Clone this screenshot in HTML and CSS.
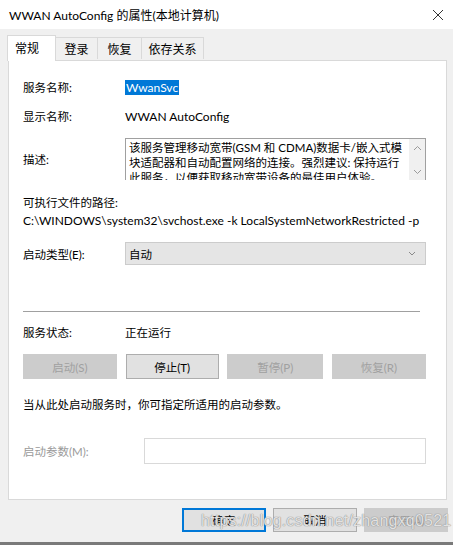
FILE: index.html
```html
<!DOCTYPE html>
<html>

<head>
	<meta charset="utf-8">
	<title>WWAN AutoConfig 的属性(本地计算机)</title>
	<link rel="stylesheet" href="styles.css">
</head>

<body>
	<div class="dialog">

		<div class="titlebar">
			<span class="title_text">WWAN AutoConfig 的属性(本地计算机)</span>
			<svg class="close_icon" width="12" height="12" viewBox="0 0 12 12">
				<path d="M1 1 L11 11 M11 1 L1 11" stroke="#333" stroke-width="1" fill="none" />
			</svg>
		</div>

		<div class="tabs">
			<div class="tab tab_active">常规</div>
			<div class="tab tab_login">登录</div>
			<div class="tab tab_recover">恢复</div>
			<div class="tab tab_deps">依存关系</div>
		</div>

		<div class="panel">

			<div class="row row_name">
				<div class="leftcolumn">服务名称:</div>
				<span class="selected_text">WwanSvc</span>
			</div>

			<div class="row row_display">
				<div class="leftcolumn">显示名称:</div>
				<span class="latin_text">WWAN AutoConfig</span>
			</div>

			<div class="row row_desc">
				<div class="leftcolumn">描述:</div>
				<div class="text_box">
					<div class="text_box_inner">
						该服务管理移动宽带(GSM 和 CDMA)数据卡/嵌入式模<br>
						块适配器和自动配置网络的连接。强烈建议: 保持运行<br>
						此服务，以便获取移动宽带设备的最佳用户体验。
					</div>
					<div class="scrollbar">
						<svg width="9" height="6" viewBox="0 0 9 6">
							<path d="M1 5 L4.5 1.5 L8 5" stroke="#9a9a9a" stroke-width="1" fill="none" />
						</svg>
						<svg width="9" height="6" viewBox="0 0 9 6">
							<path d="M1 1 L4.5 4.5 L8 1" stroke="#9a9a9a" stroke-width="1" fill="none" />
						</svg>
					</div>
				</div>
			</div>

			<div class="row row_path_label">可执行文件的路径:</div>
			<div class="row row_path">C:\WINDOWS\system32\svchost.exe -k LocalSystemNetworkRestricted -p</div>

			<div class="row row_start">
				<div class="leftcolumn">启动类型(E):</div>
				<div class="combo_box">
					<span>自动</span>
					<svg width="8" height="5" viewBox="0 0 8 5">
						<path d="M1 1 L4 4 L7 1" stroke="#8a8a8a" stroke-width="1" fill="none" />
					</svg>
				</div>
			</div>

			<div class="separator"></div>

			<div class="row row_status">
				<div class="leftcolumn">服务状态:</div>
				<span>正在运行</span>
			</div>

			<div class="button_row">
				<div class="button_menu button_disabled">启动(S)</div>
				<div class="button_menu">停止(T)</div>
				<div class="button_menu button_disabled">暂停(P)</div>
				<div class="button_menu button_disabled">恢复(R)</div>
			</div>

			<div class="row row_note">当从此处启动服务时，你可指定所适用的启动参数。</div>

			<div class="row row_params">
				<div class="leftcolumn leftcolumn_wide text_disabled">启动参数(M):</div>
				<div class="input_box"></div>
			</div>

		</div>

		<div class="footer">
			<div class="button_menu button_footer button_default">确定</div>
			<div class="button_menu button_footer">取消</div>
			<div class="button_menu button_footer button_disabled">应用(A)</div>
			<span class="watermark">https://blog.csdn.net/zhangxq0521</span>
		</div>

		<div class="bottom_edge"></div>

	</div>
</body>

</html>
```

FILE: styles.css
```css
html,
body {
	margin: 0;
	padding: 0;
}

body {
	width: 453px;
	height: 545px;
	overflow: hidden;
	background-color: #f0f0f0;
	font-family: Lato, "Noto Sans CJK SC", sans-serif;
	font-size: 11.5px;
	color: #000;
}

.dialog {
	display: flex;
	flex-direction: column;
	height: 545px;
}

.titlebar {
	height: 29px;
	background-color: #fff;
	display: flex;
	align-items: center;
	justify-content: space-between;
	padding: 0 9px 0 9px;
}

.title_text {
	font-size: 12px;
}

.tabs {
	display: flex;
	align-items: flex-end;
	height: 31px;
	padding-left: 7px;
	position: relative;
	z-index: 1;
	font-size: 12px;
}

.tab {
	height: 21px;
	border: 1px solid #d9d9d9;
	border-bottom: none;
	border-left: none;
	background-color: #f0f0f0;
	display: flex;
	align-items: center;
	justify-content: center;
	margin-bottom: 1px;
}

.tab_active {
	width: 49px;
	justify-content: flex-start;
	padding: 0 0 2px 7px;
	box-sizing: border-box;
	height: 26px;
	background-color: #fff;
	border-left: 1px solid #d9d9d9;
	margin-bottom: -1px;
}

.tab_login {
	width: 41px;
}

.tab_recover {
	width: 43px;
}

.tab_deps {
	width: 61px;
}

.panel {
	margin: 0 6px 0 8px;
	height: 438px;
	background-color: #fff;
	border: 1px solid #d9d9d9;
	padding: 0 20px 0 14px;
}

.row {
	display: flex;
	align-items: center;
	white-space: nowrap;
}

.leftcolumn {
	width: 102px;
	flex: none;
}

.leftcolumn_wide {
	width: 121px;
}

.latin_text {
	font-size: 12px;
}

.row_name {
	margin-top: 15px;
	height: 22px;
}

.selected_text {
	background-color: #0078d7;
	color: #fff;
	padding: 0 1px;
	line-height: 15px;
	font-size: 12px;
}

.row_display {
	margin-top: 7px;
	height: 22px;
}

.row_desc {
	margin-top: 11px;
	height: 42px;
}

.text_box {
	flex: 1;
	height: 41px;
	border: 1px solid #a0a0a0;
	border-bottom: none;
	display: flex;
	overflow: hidden;
}

.text_box_inner {
	flex: 1;
	padding: 1px 0 0 3px;
	line-height: 15px;
	overflow: hidden;
	white-space: nowrap;
}

.scrollbar {
	width: 16px;
	flex: none;
	background-color: #f0f0f0;
	display: flex;
	flex-direction: column;
	align-items: center;
	justify-content: space-between;
	padding: 6px 0 5px 0;
}

.row_path_label {
	margin-top: 12px;
	height: 19px;
}

.row_path {
	height: 19px;
	font-size: 12px;
}

.row_start {
	margin-top: 12px;
	height: 23px;
}

.combo_box {
	flex: 1;
	height: 21px;
	background-color: #e5e5e5;
	border: 1px solid #cccccc;
	display: flex;
	align-items: center;
	justify-content: space-between;
	padding: 0 9px 0 3px;
}

.separator {
	margin-top: 46px;
	height: 1px;
	background-color: #a0a0a0;
	margin-right: 6px;
}

.row_status {
	margin-top: 10px;
	height: 20px;
}

.button_row {
	margin-top: 12px;
	display: grid;
	grid-template-columns: 94px 93px 96px 94px;
	column-gap: 8px;
	justify-content: space-between;
}

.button_menu {
	height: 23px;
	border: 1px solid #adadad;
	background-color: #e1e1e1;
	display: flex;
	align-items: center;
	justify-content: center;
}

.button_disabled {
	background-color: #cccccc;
	border-color: #cccccc;
	color: #a0a0a0;
}

.row_note {
	margin-top: 15px;
	height: 20px;
}

.row_params {
	margin-top: 24px;
	height: 26px;
}

.text_disabled {
	color: #9a9a9a;
}

.input_box {
	flex: 1;
	height: 24px;
	border: 1px solid #d9d9d9;
}

.footer {
	position: relative;
	display: flex;
	justify-content: flex-end;
	gap: 7px;
	padding: 8px 5px 0 0;
	height: 34px;
}

.button_footer {
	width: 82px;
	height: 22px;
}

.button_default {
	border: 2px solid #0078d7;
	width: 80px;
	height: 20px;
}

.watermark {
	position: absolute;
	left: 201px;
	top: 12px;
	font-family: "Liberation Sans", sans-serif;
	font-size: 16px;
	color: rgba(255, 255, 255, 0.75);
	text-shadow: 0 0 1px #8a8a8a, 0 0 1px #8a8a8a;
	letter-spacing: 0.2px;
}

.bottom_edge {
	margin-top: auto;
	height: 3px;
	background-color: #7a7a7a;
}
```
